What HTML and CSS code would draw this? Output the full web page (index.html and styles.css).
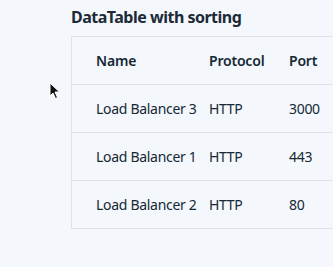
FILE: index.html
```html
<!DOCTYPE html>
<html lang="en">
<head>
    <meta charset="UTF-8">
    <title>DataTable with sorting</title>
    <link rel="stylesheet" href="styles.css">
</head>
<body>
    <div class="page">
        <h2 class="table-title">DataTable with sorting</h2>
        <div class="data-table">
            <div class="row header-row">
                <div class="cell">Name</div>
                <div class="cell">Protocol</div>
                <div class="cell">Port</div>
            </div>
            <div class="row">
                <div class="cell">Load Balancer 3</div>
                <div class="cell">HTTP</div>
                <div class="cell">3000</div>
            </div>
            <div class="row">
                <div class="cell">Load Balancer 1</div>
                <div class="cell">HTTP</div>
                <div class="cell">443</div>
            </div>
            <div class="row">
                <div class="cell">Load Balancer 2</div>
                <div class="cell">HTTP</div>
                <div class="cell">80</div>
            </div>
        </div>
    </div>
    <svg class="cursor" width="12" height="18" viewBox="0 0 12 18">
        <path d="M1 1 L1 14 L4 11 L6.5 16.5 L8.5 15.5 L6 10 L10.5 10 Z" fill="#111" stroke="#fff" stroke-width="1"/>
    </svg>
</body>
</html>
```

FILE: styles.css
```css
body {
    margin: 0;
    background-color: #f4f7fb;
    font-family: 'Noto Sans', 'Open Sans', sans-serif;
    color: #152935;
    height: 267px;
    overflow: hidden;
}

.page {
    padding: 6px 0 0 71px;
}

.table-title {
    margin: 0 0 8px 0;
    font-size: 16px;
    font-weight: 700;
    letter-spacing: -0.5px;
    line-height: 22px;
    color: #1c2a38;
}

.data-table {
    width: 262px;
    border: 1px solid #dfe3e6;
    border-right: none;
}

.row {
    display: grid;
    grid-template-columns: 137px 80px 1fr;
    height: 47px;
    align-items: center;
    border-top: 1px solid #dfe3e6;
    font-size: 14px;
    letter-spacing: -0.3px;
}

.row:first-child {
    border-top: none;
}

.header-row {
    font-weight: 600;
    letter-spacing: -0.2px;
}

.cell {
    white-space: nowrap;
}

.cell:first-child {
    padding-left: 24px;
}

.cursor {
    position: absolute;
    left: 49px;
    top: 82px;
}
```
